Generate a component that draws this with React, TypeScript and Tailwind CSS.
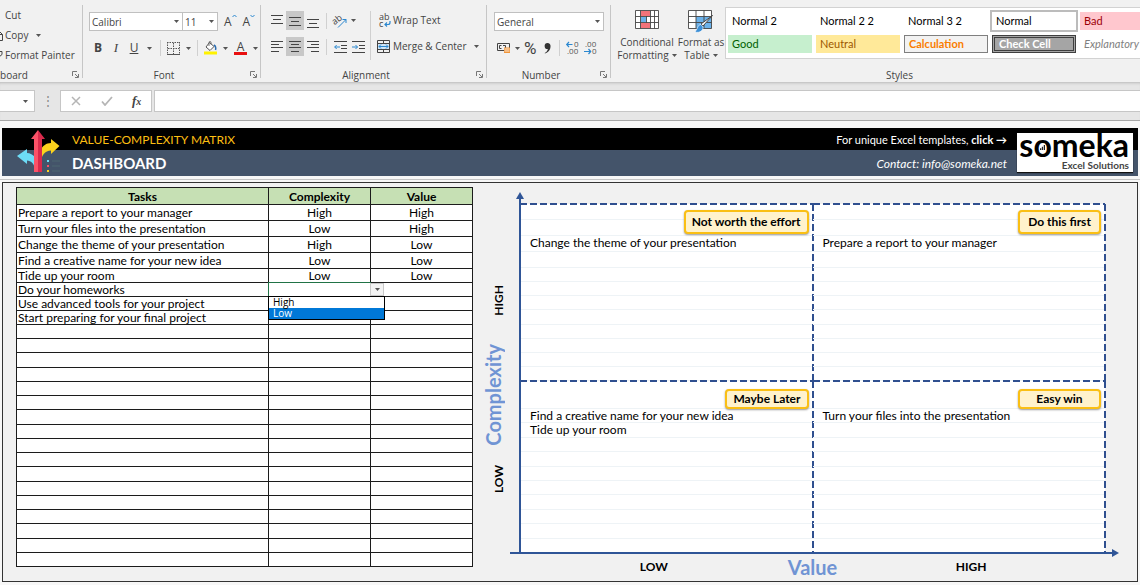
import React from "react";

type Task = { name: string; complexity?: string; value?: string };

const tasks: Task[] = [
  { name: "Prepare a report to your manager", complexity: "High", value: "High" },
  { name: "Turn your files into the presentation", complexity: "Low", value: "High" },
  { name: "Change the theme of your presentation", complexity: "High", value: "Low" },
  { name: "Find a creative name for your new idea", complexity: "Low", value: "Low" },
  { name: "Tide up your room", complexity: "Low", value: "Low" },
  { name: "Do your homeworks" },
  { name: "Use advanced tools for your project" },
  { name: "Start preparing for your final project" },
];

const EMPTY_ROWS = 17;
const ACTIVE_ROW = 5;

const Caret = () => (
  <svg width="5" height="3" viewBox="0 0 5 3" className="shrink-0" aria-hidden="true">
    <path d="M0 0h5L2.5 3z" fill="#555" />
  </svg>
);

const Launcher = () => (
  <button type="button" aria-label="More options" className="absolute right-1 bottom-1">
    <svg width="7" height="7" viewBox="0 0 7 7" fill="none" stroke="#777">
      <path d="M.5 5V.5H5M3 3l3 3M6.5 3v3.5H3" />
    </svg>
  </button>
);

const Group: React.FC<{ title: string; className: string; children: React.ReactNode }> = ({ title, className, children }) => (
  <section className={`relative shrink-0 ${className}`}>
    {children}
    <h2 className="absolute inset-x-0 bottom-0 pr-4 text-center leading-[14px]">{title}</h2>
    <Launcher />
    <span className="absolute top-[5px] right-0 bottom-1 w-px bg-[#c6c6c6]" />
  </section>
);

const Lines: React.FC<{ rows: number[][]; label: string; active?: boolean }> = ({ rows, label, active }) => (
  <button
    type="button"
    aria-label={label}
    className={`flex h-[19px] w-[18px] items-center justify-center ${active ? "bg-[#c8c8c8]" : ""}`}
  >
    <svg width="12" height="14" viewBox="0 0 12 14" stroke="#444">
      {rows.map(([x1, x2, y]) => (
        <path key={y} d={`M${x1} ${y}H${x2}`} />
      ))}
    </svg>
  </button>
);

const Indent: React.FC<{ label: string; arrow: string }> = ({ label, arrow }) => (
  <button type="button" aria-label={label} className="flex h-[19px] w-[18px] items-center justify-center">
    <svg width="13" height="12" viewBox="0 0 13 12" fill="none" stroke="#444">
      <path d="M0 .5h13M7 4.5h6M7 7.5h6M0 11.5h13" />
      <path d={arrow} stroke="#2b88d0" />
    </svg>
  </button>
);

const Clipboard = () => (
  <section className="relative w-[83px] shrink-0">
    <div className="flex flex-col items-start">
      <button type="button" className="mt-2 pl-[5px] leading-[14px]">Cut</button>
      <button type="button" className="mt-1.5 flex items-center leading-[14px]">
        <span className="flex w-[5px] justify-end overflow-hidden pr-0.5">
          <svg width="9" height="11" viewBox="0 0 9 11" fill="none" stroke="#444" className="shrink-0">
            <path d="M.5 1.5h5l3 3v6h-8z M5.5 1.5v3h3" />
          </svg>
        </span>
        Copy
        <span className="ml-2"><Caret /></span>
      </button>
      <button type="button" className="mt-1.5 flex items-center leading-[14px] whitespace-nowrap">
        <span className="flex w-[5px] justify-end overflow-hidden pr-0.5">
          <svg width="10" height="10" viewBox="0 0 10 10" fill="none" stroke="#444" className="shrink-0">
            <path d="M6 1.5h3v3L6 7v2" />
          </svg>
        </span>
        Format Painter
      </button>
    </div>
    <h2 className="absolute bottom-0 left-0 flex w-7 justify-end overflow-hidden leading-[14px]">Clipboard</h2>
    <Launcher />
    <span className="absolute top-[5px] right-0 bottom-1 w-px bg-[#c6c6c6]" />
  </section>
);

const FontGroup = () => (
  <Group title="Font" className="w-[178px] pl-1.5">
    <div className="mt-3 flex h-[19px] items-center">
      <label className="relative flex h-[19px] w-[94px] shrink-0 items-center">
        <select aria-label="Font name" className="h-full w-full appearance-none border border-[#c0c0c0] bg-white pl-0.5 text-[10px] leading-4">
          <option>Calibri</option>
        </select>
        <span className="pointer-events-none absolute right-1"><Caret /></span>
      </label>
      <label className="relative flex h-[19px] w-[35px] shrink-0 items-center">
        <select aria-label="Font size" className="h-full w-full appearance-none border border-l-0 border-[#c0c0c0] bg-white pl-0.5 text-[10px] leading-4">
          <option>11</option>
        </select>
        <span className="pointer-events-none absolute right-1"><Caret /></span>
      </label>
      <button type="button" aria-label="Increase font size" className="ml-1.5 flex">
        <span className="text-[12px] leading-4">A</span>
        <svg width="5" height="4" viewBox="0 0 5 4" fill="none" stroke="#2b88d0"><path d="M.5 3l2-2 2 2" /></svg>
      </button>
      <button type="button" aria-label="Decrease font size" className="ml-1.5 flex">
        <span className="text-[12px] leading-4">A</span>
        <svg width="5" height="4" viewBox="0 0 5 4" fill="none" stroke="#2b88d0"><path d="M.5 1l2 2 2-2" /></svg>
      </button>
    </div>
    <div className="mt-2 flex h-[18px] items-center pl-1 text-[12px]">
      <button type="button" className="w-2.5 font-bold">B</button>
      <button type="button" className="ml-2 w-2.5 font-[Liberation_Serif,serif] text-[13px] italic">I</button>
      <button type="button" className="ml-2 w-2.5 underline">U</button>
      <span className="ml-2"><Caret /></span>
      <span className="ml-2 h-4 w-px bg-[#d0d0d0]" />
      <button type="button" aria-label="Borders" className="ml-1.5 flex items-center gap-1.5">
        <svg width="13" height="13" viewBox="0 0 13 13" fill="none" stroke="#555">
          <path d="M0 .5h13M.5 0v13M12.5 0v13M6.5 1v11M1 6.5h11" strokeDasharray="1.5 1" />
          <path d="M0 12.5h13" />
        </svg>
        <Caret />
      </button>
      <span className="ml-1.5 h-4 w-px bg-[#d0d0d0]" />
      <button type="button" aria-label="Fill colour" className="ml-1.5 flex items-center gap-1.5">
        <svg width="13" height="14" viewBox="0 0 13 14" fill="none">
          <path d="M5.5 1.5L10 5.5 6 9.5 2 6z" fill="#fff" stroke="#555" />
          <path d="M5 5V1.5a1 1 0 0 1 2 0v2" stroke="#555" strokeWidth=".8" />
          <path d="M10 4c2 1 2 3 1.5 5" stroke="#2b6cb0" strokeWidth="1.5" />
          <path d="M0 10.500h13v3H0z" fill="#fff200" />
        </svg>
        <Caret />
      </button>
      <button type="button" aria-label="Font colour" className="ml-1.5 flex items-center gap-1.5">
        <span className="flex w-[13px] flex-col items-center">
          <span className="h-[11px] leading-[11px]">A</span>
          <span className="h-[3px] w-full bg-[#e81010]" />
        </span>
        <Caret />
      </button>
    </div>
  </Group>
);

const AlignmentGroup = () => (
  <Group title="Alignment" className="w-[226px] pl-[7px]">
    <div className="flex pt-[11px]">
      <div>
        <div className="flex h-[19px] items-center">
          <Lines label="Top align" rows={[[0, 12, 1.5], [2, 10, 5.5], [0, 12, 9.5]]} />
          <Lines label="Middle align" active rows={[[0, 12, 3.5], [2, 10, 7.5], [0, 12, 11.5]]} />
          <Lines label="Bottom align" rows={[[0, 12, 5.5], [2, 10, 9.5], [0, 12, 13.5]]} />
          <span className="mr-1.5 ml-1 h-4 w-px bg-[#d0d0d0]" />
          <button type="button" aria-label="Orientation" className="flex items-center gap-1">
            <svg width="14" height="14" viewBox="0 0 14 14" fill="none" className="overflow-visible">
              <text x="0" y="9" fontSize="9" fill="#444" transform="rotate(-38 4 8)">ab</text>
              <path d="M5 13.5L13 5.500M9.500 5.500H13V9" stroke="#2b88d0" />
            </svg>
            <Caret />
          </button>
        </div>
        <div className="mt-[7px] flex h-[19px] items-center">
          <Lines label="Align left" rows={[[0, 12, 1.5], [0, 8, 4.5], [0, 12, 7.5], [0, 8, 11.5]]} />
          <Lines label="Center" active rows={[[0, 12, 1.5], [2, 10, 4.5], [0, 12, 7.5], [2, 10, 11.5]]} />
          <Lines label="Align right" rows={[[0, 12, 1.5], [4, 12, 4.5], [0, 12, 7.5], [4, 12, 11.5]]} />
          <span className="mx-1 h-4 w-px bg-[#d0d0d0]" />
          <Indent label="Decrease indent" arrow="M6 6H.7M2.7 4l-2 2 2 2" />
          <Indent label="Increase indent" arrow="M0 6h5.500M3.500 4l2 2-2 2" />
        </div>
      </div>
      <span className="mr-1.5 ml-[3px] h-[49px] w-px bg-[#d0d0d0]" />
      <div>
        <button type="button" className="flex h-[19px] items-center gap-0.5 pl-0.5">
          <svg width="12" height="14" viewBox="0 0 12 14" fill="none" className="overflow-visible">
            <text x="0" y="6" fontSize="9" fill="#444">ab</text>
            <text x="0" y="13" fontSize="9" fill="#444">c</text>
            <path d="M11 7v1.500a2 2 0 0 1-2 2H6M8 8.500l-2 2 2 2" stroke="#2b88d0" strokeWidth="1.200" />
          </svg>
          Wrap Text
        </button>
        <button type="button" className="mt-[7px] flex h-[19px] items-center gap-[3px] whitespace-nowrap">
          <svg width="13" height="13" viewBox="0 0 13 13" fill="none">
            <path d="M.5.5h12v12H.5zM.5 3.500h12M.5 9.500h12M6.500 0v3M6.500 10v3" stroke="#444" />
            <path d="M1 4h11v5H1z" fill="#cfe5f7" />
            <path d="M2 6.500h9M4 4.500l-2 2 2 2M9 4.500l2 2-2 2" stroke="#2b88d0" />
          </svg>
          Merge &amp; Center
          <span className="ml-1"><Caret /></span>
        </button>
      </div>
    </div>
  </Group>
);

const NumberGroup = () => (
  <Group title="Number" className="w-[124px] pr-[7px] pl-[7px]">
    <label className="relative mt-3 flex h-[19px] items-center">
      <select aria-label="Number format" className="h-full w-full appearance-none border border-[#c0c0c0] bg-white pl-0.5 text-[10px] leading-4">
        <option>General</option>
      </select>
      <span className="pointer-events-none absolute right-1"><Caret /></span>
    </label>
    <div className="mt-2 flex h-[18px] items-center pl-[3px]">
      <button type="button" aria-label="Accounting format" className="flex items-center gap-1">
        <svg width="14" height="12" viewBox="0 0 14 12" fill="none">
          <path d="M.5 1.500h12v7H.500z" stroke="#444" />
          <path d="M4.500 3.500h-2v3h2M6 3.500h2.500v3" stroke="#444" />
          <path d="M7 5.500h6V11H7z" fill="#f0953a" />
          <path d="M7.500 7h5M7.500 9h5" stroke="#fff" strokeWidth=".8" />
        </svg>
        <Caret />
      </button>
      <button type="button" className="ml-1 font-[Roboto,sans-serif] text-[17px] leading-4">%</button>
      <button type="button" aria-label="Comma style" className="ml-2">
        <svg width="7" height="11" viewBox="0 0 7 11"><path d="M3.500 0A3 3 0 0 1 6.500 3.500C6.500 7 4 9.500 1 10.500L.700 10C2.500 9 3.800 7.500 3.800 6A3 3 0 1 1 3.500 0z" fill="#333" /></svg>
      </button>
      <span className="ml-2 h-4 w-px bg-[#d0d0d0]" />
      <button type="button" aria-label="Increase decimal" className="ml-1.5">
        <svg width="13" height="14" viewBox="0 0 13 14" fill="none" className="overflow-visible">
          <text x="8" y="6" fontSize="8" fill="#555">0</text>
          <text x="1" y="13" fontSize="8" fill="#555">.00</text>
          <path d="M6.500 3.500H.700M3 1L.700 3.500 3 6" stroke="#2b88d0" strokeWidth="1.200" />
        </svg>
      </button>
      <button type="button" aria-label="Decrease decimal" className="ml-[5px]">
        <svg width="13" height="14" viewBox="0 0 13 14" fill="none" className="overflow-visible">
          <text x="1" y="6" fontSize="8" fill="#555">.00</text>
          <text x="8" y="13" fontSize="8" fill="#555">0</text>
          <path d="M0 10.500h6.500M4.500 8l2.200 2.500L4.500 13" stroke="#2b88d0" strokeWidth="1.200" />
        </svg>
      </button>
    </div>
  </Group>
);

const styleCell = "flex h-[18px] items-center pl-1 whitespace-nowrap";

const StylesGroup = () => (
  <section className="relative flex min-w-0 flex-1 overflow-hidden">
    <button type="button" className="mt-2.5 flex w-[66px] shrink-0 flex-col items-center self-start pl-1.5 leading-[13px]">
      <svg width="24" height="20" viewBox="0 0 24 20" fill="none">
        <path d="M.5.5h23v18H.5z" fill="#fff" />
        <path d="M6 1h9v5H6zM6 13h9v5H6z" fill="#f2737a" />
        <path d="M6 7h5v5H6z" fill="#6cb2ea" />
        <path d="M.5.500h23v18H.5zM.5 6.500h23M.5 12.500h23M5.500.5v18M11.500 6v7M15.500.5v18M19.500.5v18" stroke="#444" strokeWidth=".9" />
      </svg>
      <span className="mt-1.5">Conditional</span>
      <span className="flex items-center gap-[3px]">Formatting <Caret /></span>
    </button>
    <button type="button" className="mt-2.5 flex w-12 shrink-0 flex-col items-center self-start leading-[13px] whitespace-nowrap">
      <svg width="26" height="24" viewBox="0 0 26 24" fill="none" className="-mb-1">
        <path d="M.5.500h23v18H.5z" fill="#fff" />
        <path d="M8 6.500h15.500v12H8z" fill="#6cb2ea" />
        <path d="M.5.500h23v18H.5zM.5 6.500h23M.5 12.500h23M8 .500v18M16 .500v18" stroke="#444" strokeWidth=".9" />
        <path d="M24.500 5.500L15 16l-2-2z" fill="#fff" stroke="#444" />
        <path d="M13 14.500c-3 0-3 3.500-6 7.500 5 1.500 8.500-2 8-5z" fill="#3d8fd6" stroke="#fff" strokeWidth=".6" />
      </svg>
      <span className="mt-1.5">Format as</span>
      <span className="flex items-center gap-[3px]">Table <Caret /></span>
    </button>
    <div className="mt-[7px] h-[52px] min-w-0 flex-1 overflow-hidden border border-r-0 border-[#d2d2d2] bg-white px-0.5 py-1 font-[Lato,sans-serif] text-[11px] text-black">
      <div className="grid grid-flow-col grid-rows-2 justify-start gap-x-1 gap-y-[5px] [grid-auto-columns:84px]">
        <button type="button" className={styleCell}>Normal 2</button>
        <button type="button" className={`${styleCell} bg-[#c6efce] text-[#006100]`}>Good</button>
        <button type="button" className={styleCell}>Normal 2 2</button>
        <button type="button" className={`${styleCell} bg-[#ffe999] text-[#9c5700]`}>Neutral</button>
        <button type="button" className={styleCell}>Normal 3 2</button>
        <button type="button" className={`${styleCell} border border-[#7f7f7f] bg-[#f2f2f2] font-bold text-[#fa7d00]`}>Calculation</button>
        <button type="button" className={`${styleCell} outline-2 outline-[#bcbcbc]`}>Normal</button>
        <button type="button" className={`${styleCell} border-3 border-double border-[#3f3f3f] bg-[#a5a5a5] font-bold text-white`}>Check Cell</button>
        <button type="button" className={`${styleCell} bg-[#ffc7ce] text-[#9c0006]`}>Bad</button>
        <button type="button" className={`${styleCell} text-[#7f7f7f] italic`}>Explanatory Text</button>
      </div>
    </div>
    <h2 className="absolute inset-x-0 bottom-0 pl-12 text-center leading-[14px]">Styles</h2>
  </section>
);

const FormulaBar = () => (
  <div className="flex h-[39px] shrink-0 items-center border-b border-[#a6a6a6] bg-[#e6e6e6] shadow-[inset_0_3px_3px_-2px_#b8b8b8]">
    <div className="relative flex h-[22px] w-[35px] items-center border border-l-0 border-[#c6c6c6] bg-white">
      <input aria-label="Name box" className="w-full outline-none" />
      <span className="absolute right-1.5"><Caret /></span>
    </div>
    <span className="w-[25px] text-center text-[12px] leading-3 text-[#888]">⋮</span>
    <div className="flex h-[22px] w-[92px] items-center border border-[#c6c6c6] bg-white pl-2.5">
      <button type="button" aria-label="Cancel">
        <svg width="10" height="10" viewBox="0 0 10 10" stroke="#b5b5b5" strokeWidth="1.500"><path d="M1 1l8 8M9 1L1 9" /></svg>
      </button>
      <button type="button" aria-label="Enter" className="ml-5">
        <svg width="12" height="10" viewBox="0 0 12 10" fill="none" stroke="#b5b5b5" strokeWidth="1.800"><path d="M1 5.500L4 9l7-8" /></svg>
      </button>
      <button type="button" className="ml-[19px] font-[Liberation_Serif,serif] text-[13px] leading-4 font-bold text-[#444] italic">
        f<span className="text-[10px]">x</span>
      </button>
    </div>
    <input aria-label="Formula" className="ml-[2px] h-[22px] min-w-0 flex-1 border border-r-0 border-[#c6c6c6] bg-white px-1 outline-none" />
  </div>
);

const ArrowsLogo = () => (
  <svg width="46" height="46" viewBox="0 0 46 46" className="shrink-0" aria-hidden="true">
    <path d="M25 34C25 26 29 22 35 21.500V25l8.500-8-8.500-7v4C30 14 27 17 25 20z" fill="#fcd21d" />
    <path d="M19 40C18 34 15 32 11 31.500V35L1 27l10-7v4C14 24 17 26 19 28z" fill="#6ddcf7" />
    <path d="M22 1l7 9h-3v33h-4z" fill="#d92a4c" />
    <path d="M22 1l-7 9h3v33h4z" fill="#fb5268" />
    <path d="M31 31h2v2h-2z" fill="#6ddcf7" />
    <path d="M31 36h2v2h-2z" fill="#fb5268" />
    <path d="M31 41h2v2h-2z" fill="#fcd21d" />
    <path d="M36 32h8M36 37h8M36 42h8" stroke="#4d6670" />
  </svg>
);

const Banner = () => (
  <header className="mx-0.5 mt-[7px] flex h-12 shrink-0 items-center bg-[linear-gradient(#000_22px,#44546a_22px)] pr-[5px] pl-3.5 font-[Lato,sans-serif] text-white">
    <ArrowsLogo />
    <div className="ml-2.5 flex flex-1 flex-col self-stretch whitespace-nowrap">
      <p className="text-[12px] leading-[23px] text-[#fdbf12]">VALUE-COMPLEXITY MATRIX</p>
      <h1 className="text-[15px] leading-[25px] font-bold">DASHBOARD</h1>
    </div>
    <div className="mr-2.5 flex flex-col self-stretch text-right whitespace-nowrap">
      <p className="text-[11px] leading-6">
        For unique Excel templates, <a href="#templates" className="font-bold">click →</a>
      </p>
      <a href="mailto:info@someka.net" className="text-[12px] leading-6 italic">Contact: info@someka.net</a>
    </div>
    <div className="flex h-[39px] w-[116px] flex-col items-end bg-white pr-1 shadow-[0_1px_1px_#111]">
      <span className="flex h-[26px] text-[32px] leading-[24px] font-bold text-black">
        s
        <span className="relative flex h-6 items-center justify-center">
          o
          <svg width="5" height="5" viewBox="0 0 6 6" className="absolute top-3" aria-hidden="true">
            <path d="M0 4h1.500v2H0zM2.200 2h1.500v4H2.200zM4.500 0H6v6H4.500z" fill="#222" />
          </svg>
        </span>
        meka
      </span>
      <span className="text-[10px] leading-[13px] font-bold text-[#444]">Excel Solutions</span>
    </div>
  </header>
);

const cell = "border border-[#1c1c1c] p-0";

const TaskTable = () => (
  <table className="h-full w-full table-fixed border-collapse bg-white text-[12px] leading-[13px]">
    <colgroup>
      <col />
      <col className="w-[102px]" />
      <col className="w-[102px]" />
    </colgroup>
    <thead>
      <tr className="h-[17px] bg-[#c6e0b4]">
        <th className={cell}>Tasks</th>
        <th className={cell}>Complexity</th>
        <th className={cell}>Value</th>
      </tr>
    </thead>
    <tbody>
      {tasks.map((task, i) => (
        <tr key={task.name} className={i < 4 ? "h-4" : "h-3.5"}>
          <td className={`${cell} pl-px`}>{task.name}</td>
          <td className={`${cell} relative text-center`}>
            {i === ACTIVE_ROW ? <ComplexityPicker /> : task.complexity}
          </td>
          <td className={`${cell} text-center`}>{task.value}</td>
        </tr>
      ))}
      {/* blank rows share whatever height is left */}
      {Array.from({ length: EMPTY_ROWS }, (_, i) => (
        <tr key={i}>
          <td className={cell} />
          <td className={cell} />
          <td className={cell} />
        </tr>
      ))}
    </tbody>
  </table>
);

const ComplexityPicker = () => (
  <>
    <span className="absolute -inset-px z-10 border border-[#217346]" />
    <button
      type="button"
      aria-label="Choose complexity"
      className="absolute top-0 left-full z-10 flex h-[13px] w-3.5 items-center justify-center border border-[#c8c8c8] bg-[#f3f3f3]"
    >
      <Caret />
    </button>
    <ul
      role="listbox"
      className="absolute top-full -left-px z-20 w-[117px] border border-black bg-white text-left font-[Open_Sans,sans-serif] text-[10px] leading-[11px]"
    >
      <li role="option" aria-selected="false" className="pl-1">High</li>
      <li role="option" aria-selected="true" className="bg-[#0078d7] pl-1 text-white">Low</li>
    </ul>
  </>
);

type QuadrantProps = { label: string; items: string[]; upper?: boolean };

const Quadrant: React.FC<QuadrantProps> = ({ label, items, upper }) => {
  // the first rows are only there to leave space for the badge
  const lead = upper ? 2 : 1;
  const count = upper ? 12 : 11;
  return (
    <section className="relative flex flex-col">
      <h3
        className={`absolute right-1 flex min-w-[83px] items-center justify-center rounded border-2 border-[#fabf14] bg-[#fff2cc] px-1.5 text-[12px] font-bold shadow-[0_1px_2px_#999] ${upper ? "top-1.5 h-6" : "top-2 h-5"}`}
      >
        {label}
      </h3>
      {Array.from({ length: count }, (_, i) => (
        <p
          key={i}
          className={`border-b border-[#eef3f6] pl-2.5 text-[12px] leading-[13px] ${
            upper ? (i < 4 ? "h-4" : "grow basis-3.5") : i === 0 ? "h-7" : "grow basis-3.5"
          }`}
        >
          {items[i - lead]}
        </p>
      ))}
      <span className="absolute inset-x-0 -top-px h-0.5 bg-[repeating-linear-gradient(90deg,#2f4f8f_0_7px,transparent_7px_10px)]" />
      <span className="absolute inset-y-0 -right-px w-0.5 bg-[repeating-linear-gradient(#2f4f8f_0_7px,transparent_7px_10px)]" />
    </section>
  );
};

const Matrix = () => (
  <>
    <div className="flex w-9 shrink-0 flex-col items-center pt-[102px] pr-[19px] font-bold">
      <span className="mb-7 ml-3 rotate-180 text-[12px] leading-4 [writing-mode:vertical-rl]">HIGH</span>
      <span className="mb-5 rotate-180 text-[20px] leading-6 text-[#7094d4] [writing-mode:vertical-rl]">Complexity</span>
      <span className="ml-3 rotate-180 text-[12px] leading-4 [writing-mode:vertical-rl]">LOW</span>
    </div>
    <div className="flex min-w-0 flex-[585_1_0] flex-col pt-[21px]">
      <div className="relative grid flex-1 grid-cols-2 grid-rows-[177fr_172fr] bg-white">
        <Quadrant upper label="Not worth the effort" items={["Change the theme of your presentation"]} />
        <Quadrant upper label="Do this first" items={["Prepare a report to your manager"]} />
        <Quadrant label="Maybe Later" items={["Find a creative name for your new idea", "Tide up your room"]} />
        <Quadrant label="Easy win" items={["Turn your files into the presentation"]} />
        <span className="absolute -top-1.5 bottom-0 -left-px w-0.5 bg-[#2f5597]" />
        <span className="absolute -right-2 -bottom-px -left-2.5 h-0.5 bg-[#2f5597]" />
        <svg width="8" height="7" viewBox="0 0 8 7" className="absolute -top-3 -left-1"><path d="M4 0l4 7H0z" fill="#2f5597" /></svg>
        <svg width="7" height="8" viewBox="0 0 7 8" className="absolute -right-3.5 -bottom-1"><path d="M7 4L0 8V0z" fill="#2f5597" /></svg>
      </div>
      <div className="grid h-7 grid-cols-[1fr_auto_1fr] items-center text-center text-[12px] font-bold">
        <span>LOW</span>
        <span className="text-[20px] leading-6 text-[#7094d4]">Value</span>
        <span>HIGH</span>
      </div>
    </div>
  </>
);

export default function App() {
  return (
    <div className="flex min-h-screen flex-col bg-[#f7f7f7] pb-[3px] font-[Open_Sans,sans-serif] text-[10px] text-[#444]">
      <div className="flex h-[82px] shrink-0 bg-[#f1f1f1]">
        <Clipboard />
        <FontGroup />
        <AlignmentGroup />
        <NumberGroup />
        <StylesGroup />
      </div>
      <FormulaBar />
      <Banner />
      <div className="mt-[3px] h-px shrink-0 bg-[#c4c4c4]" />
      <main className="mx-0.5 mt-0.5 flex flex-1 border border-[#333] bg-[#f1f1f1] pr-8 pl-[13px] font-[Lato,sans-serif] text-black">
        <div className="mr-[11px] min-w-0 flex-[457_1_0] pt-1 pb-3.5">
          <TaskTable />
        </div>
        <Matrix />
      </main>
    </div>
  );
}
